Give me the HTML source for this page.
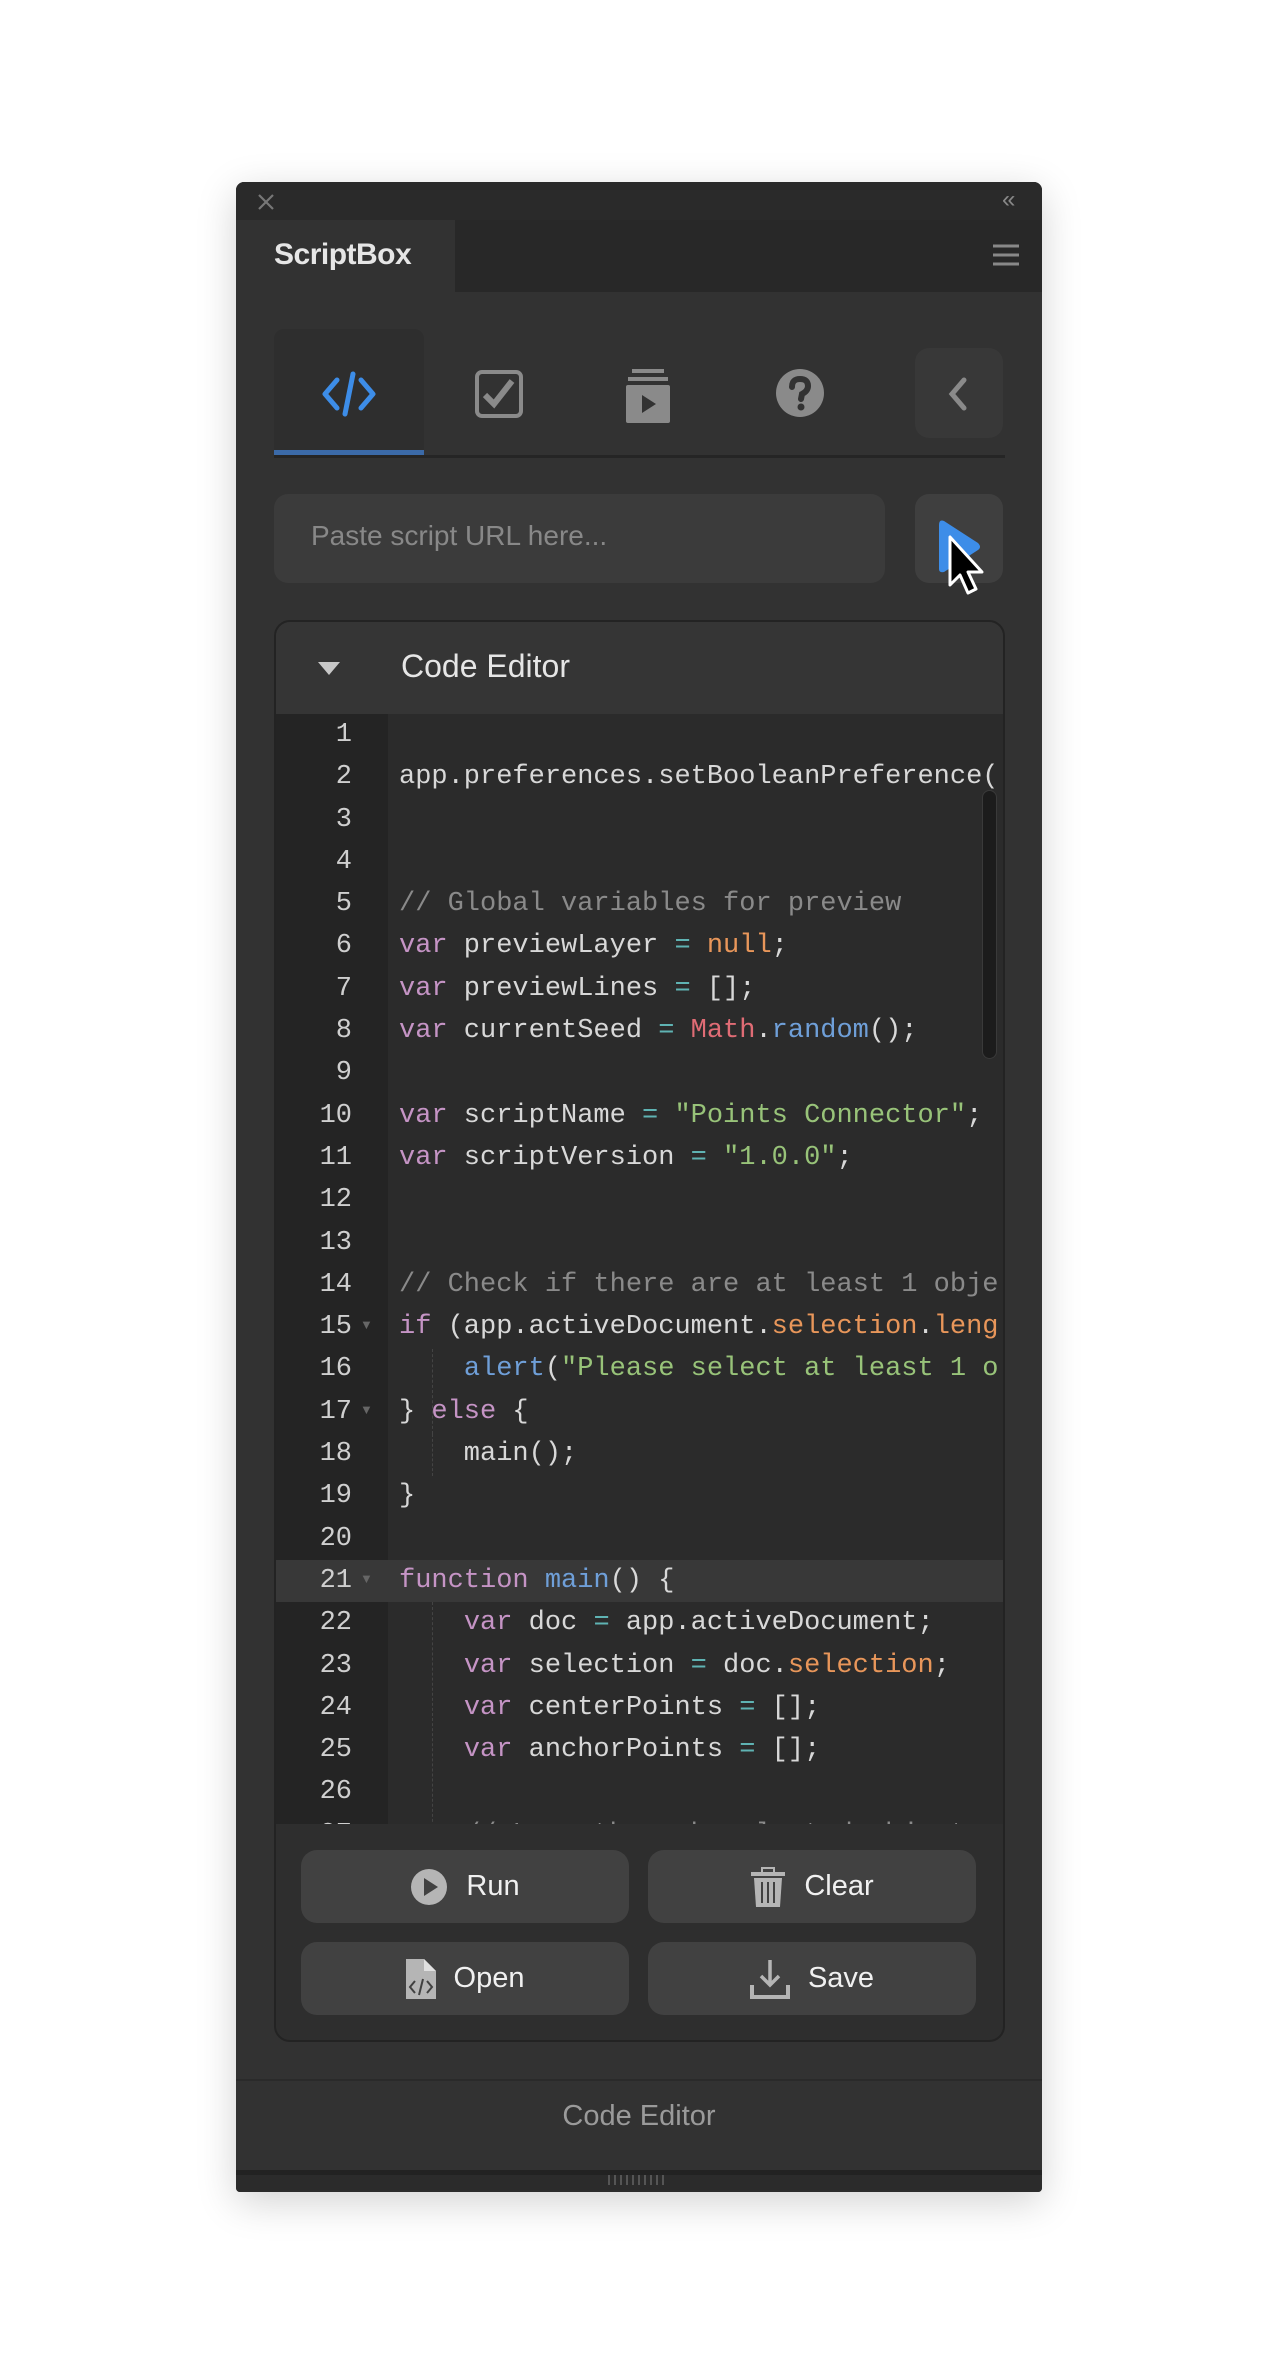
<!DOCTYPE html>
<html><head><meta charset="utf-8"><style>
*{box-sizing:border-box;margin:0;padding:0}
body{width:1280px;height:2377px;background:#fff;font-family:"Liberation Sans",sans-serif;position:relative;overflow:hidden}
.panel{position:absolute;left:236px;top:182px;width:806px;height:2010px;background:#323232;border-radius:8px 8px 4px 4px;box-shadow:0 10px 40px rgba(0,0,0,.18);overflow:hidden}
.abs{position:absolute}
.titlebar{left:0;top:0;width:806px;height:38px;background:#2a2a2a}
.tabrow{left:0;top:38px;width:806px;height:72px;background:#282828}
.sbtab{left:0;top:38px;width:219px;height:72px;background:#323232;color:#e6e6e6;font-weight:bold;font-size:30px;padding:18px 0 0 38px;letter-spacing:-.5px}
.code{font-family:"Liberation Mono",monospace;font-size:27px;line-height:42.3px;white-space:pre;color:#d8d8d8}
.k{color:#c594c5}.o{color:#e8965a}.r{color:#e06c75}.b{color:#6f9fd8}.s{color:#98c379}.e{color:#5fb3b3}.c{color:#8a8a8a}
.btn{background:#414141;border-radius:16px;color:#f0f0f0;font-size:29px;display:flex;align-items:center;justify-content:center;gap:18px}
</style></head><body>
<div class="panel">
 <div class="abs titlebar"></div>
 <svg class="abs" style="left:20px;top:10px" width="20" height="20" viewBox="0 0 20 20"><path d="M3 3L17 17M17 3L3 17" stroke="#777" stroke-width="2.2"/></svg>
 <div class="abs" style="left:766px;top:4px;color:#888;font-size:24px">«</div>
 <div class="abs tabrow"></div>
 <div class="abs sbtab">ScriptBox</div>
 <svg class="abs" style="left:757px;top:62px" width="26" height="22" viewBox="0 0 26 22"><path d="M0 2H26M0 11H26M0 20H26" stroke="#888" stroke-width="3"/></svg>

 <div class="abs" style="left:38px;top:147px;width:150px;height:126px;background:#2e2e2e;border-radius:10px 10px 0 0"></div>
 <div class="abs" style="left:38px;top:268px;width:150px;height:5px;background:#3b6aa8"></div>
 <div class="abs" style="left:38px;top:273px;width:731px;height:3px;background:#252525"></div>
 <svg class="abs" style="left:85px;top:184px" width="56" height="56" viewBox="0 0 56 56"><path d="M16 14L4 28L16 42M40 14L52 28L40 42M32 8L24 48" fill="none" stroke="#3d8de8" stroke-width="5" stroke-linecap="round" stroke-linejoin="round"/></svg>
 <svg class="abs" style="left:238px;top:187px" width="50" height="50" viewBox="0 0 50 50"><rect x="3" y="3" width="44" height="44" rx="5" fill="none" stroke="#8a8a8a" stroke-width="4"/><path d="M11 26L20 35L38 12" fill="none" stroke="#8a8a8a" stroke-width="6"/></svg>
 <svg class="abs" style="left:390px;top:185px" width="44" height="56" viewBox="0 0 44 56"><rect x="6" y="2" width="32" height="4" fill="#8a8a8a"/><rect x="2" y="10" width="40" height="4" fill="#8a8a8a"/><rect x="0" y="18" width="44" height="38" rx="2" fill="#8a8a8a"/><path d="M16 28L30 37L16 46Z" fill="#323232"/></svg>
 <svg class="abs" style="left:539px;top:186px" width="50" height="50" viewBox="0 0 50 50"><circle cx="25" cy="25" r="24" fill="#8a8a8a"/><path d="M17 19Q17 11 25 11Q33 11 33 18Q33 23 27 26L26 31" fill="none" stroke="#323232" stroke-width="6" stroke-linecap="round"/><circle cx="26" cy="39" r="3.5" fill="#323232"/></svg>
 <div class="abs" style="left:679px;top:166px;width:88px;height:90px;background:#383838;border-radius:14px"></div>
 <svg class="abs" style="left:710px;top:194px" width="24" height="36" viewBox="0 0 24 36"><path d="M18 4L6 18L18 32" fill="none" stroke="#8a8a8a" stroke-width="5" stroke-linecap="round"/></svg>

 <div class="abs" style="left:38px;top:312px;width:611px;height:89px;background:#3b3b3b;border-radius:14px;color:#888;font-size:28px;padding:26px 0 0 37px">Paste script URL here...</div>
 <div class="abs" style="left:679px;top:312px;width:88px;height:89px;background:#3f3f3f;border-radius:14px"></div>
 <svg class="abs" style="left:700px;top:325px" width="60" height="90" viewBox="0 0 60 90"><path d="M3 18Q3 12 8 14L42 36Q46 40 42 43L8 65Q3 66 3 62Z" fill="#3d8de8"/><path d="M14 30L14 78L24 68L32 86L40 82L32 65L46 65Z" fill="#000" stroke="#fff" stroke-width="3" stroke-linejoin="round"/></svg>

 <div class="abs" style="left:38px;top:438px;width:731px;height:1422px;background:#2e2e2e;border:2px solid #232323;border-radius:16px;overflow:hidden">
  <div class="abs" style="left:0;top:0;width:731px;height:92px;background:#353535"></div>
  <svg class="abs" style="left:42px;top:40px" width="22" height="14" viewBox="0 0 22 14"><path d="M0 0H22L11 13Z" fill="#c8c8c8"/></svg>
  <div class="abs" style="left:125px;top:26px;color:#e6e6e6;font-size:32px">Code Editor</div>
  <div class="abs" style="left:0;top:92px;width:731px;height:1110px;background:#2b2b2b;overflow:hidden">
   <div class="abs" style="left:0;top:0;width:112px;height:1110px;background:#242424"></div>
   <div class="abs" style="left:0;top:846px;width:731px;height:42px;background:#383838"></div>
   <div class="abs code" style="left:0;top:0;width:76px;text-align:right;color:#cfcfcf">1
2
3
4
5
6
7
8
9
10
11
12
13
14
15
16
17
18
19
20
21
22
23
24
25
26
27</div>
   <div class="abs" style="left:84px;top:603px;color:#666;font-size:13px">▼</div>
   <div class="abs" style="left:84px;top:688px;color:#666;font-size:13px">▼</div>
   <div class="abs" style="left:84px;top:857px;color:#666;font-size:13px">▼</div>
   <div class="abs" style="left:156px;top:635px;width:0;height:85px;border-left:1px dashed #444"></div>
   <div class="abs" style="left:156px;top:720px;width:0;height:42px;border-left:1px dashed #444"></div>
   <div class="abs" style="left:156px;top:888px;width:0;height:230px;border-left:1px dashed #444"></div>
   <div class="abs code" style="left:123px;top:0;width:600px;overflow:hidden">
app.preferences.setBooleanPreference(


<span class="c">// Global variables for preview</span>
<span class="k">var</span> previewLayer <span class="e">=</span> <span class="o">null</span>;
<span class="k">var</span> previewLines <span class="e">=</span> [];
<span class="k">var</span> currentSeed <span class="e">=</span> <span class="r">Math</span>.<span class="b">random</span>();

<span class="k">var</span> scriptName <span class="e">=</span> <span class="s">"Points Connector"</span>;
<span class="k">var</span> scriptVersion <span class="e">=</span> <span class="s">"1.0.0"</span>;


<span class="c">// Check if there are at least 1 objects</span>
<span class="k">if</span> (app.activeDocument.<span class="o">selection</span>.<span class="o">length</span>
    <span class="b">alert</span>(<span class="s">"Please select at least 1 object</span>
} <span class="k">else</span> {
    main();
}

<span class="k">function</span> <span class="b">main</span>() {
    <span class="k">var</span> doc <span class="e">=</span> app.activeDocument;
    <span class="k">var</span> selection <span class="e">=</span> doc.<span class="o">selection</span>;
    <span class="k">var</span> centerPoints <span class="e">=</span> [];
    <span class="k">var</span> anchorPoints <span class="e">=</span> [];

    <span class="c">// Loop through selected objects</span></div>
   <div class="abs" style="left:706px;top:76px;width:15px;height:269px;background:#1c1c1c;border:1px solid #3a3a3a;border-radius:8px"></div>
  </div>
  <div class="abs btn" style="left:25px;top:1228px;width:328px;height:73px"><svg width="38" height="38" viewBox="0 0 38 38"><circle cx="19" cy="19" r="18" fill="#b5b5b5"/><path d="M14 10L28 19L14 28Z" fill="#414141"/></svg>Run</div>
  <div class="abs btn" style="left:372px;top:1228px;width:328px;height:73px"><svg width="36" height="40" viewBox="0 0 36 40"><rect x="12" y="1" width="12" height="5" fill="none" stroke="#b5b5b5" stroke-width="2"/><rect x="1" y="5" width="34" height="4" fill="#b5b5b5"/><path d="M4 11H32L30 40H6Z" fill="#b5b5b5"/><path d="M12 15V36M18 15V36M24 15V36" stroke="#414141" stroke-width="2"/></svg>Clear</div>
  <div class="abs btn" style="left:25px;top:1320px;width:328px;height:73px"><svg width="30" height="40" viewBox="0 0 30 40"><path d="M0 0H18L30 12V40H0Z" fill="#b5b5b5"/><path d="M18 0V12H30" fill="#e0e0e0"/><path d="M9 22L4 28L9 34M21 22L26 28L21 34M17 20L13 36" fill="none" stroke="#414141" stroke-width="2"/></svg>Open</div>
  <div class="abs btn" style="left:372px;top:1320px;width:328px;height:73px"><svg width="40" height="40" viewBox="0 0 40 40"><path d="M20 1V26M11 17L20 26L29 17" fill="none" stroke="#b5b5b5" stroke-width="3.5"/><path d="M2 26V38H38V26" fill="none" stroke="#b5b5b5" stroke-width="4"/></svg>Save</div>
 </div>

 <div class="abs" style="left:0;top:1897px;width:806px;height:2px;background:#2a2a2a"></div>
 <div class="abs" style="left:0;top:1918px;width:806px;text-align:center;color:#9a9a9a;font-size:29px">Code Editor</div>
 <div class="abs" style="left:0;top:1988px;width:806px;height:22px;background:#2b2b2b;border-top:5px solid #222"></div>
 <div class="abs" style="left:372px;top:1993px;width:60px;height:10px;background:repeating-linear-gradient(90deg,#555 0 2px,transparent 2px 6px)"></div>
</div>
</body></html>
